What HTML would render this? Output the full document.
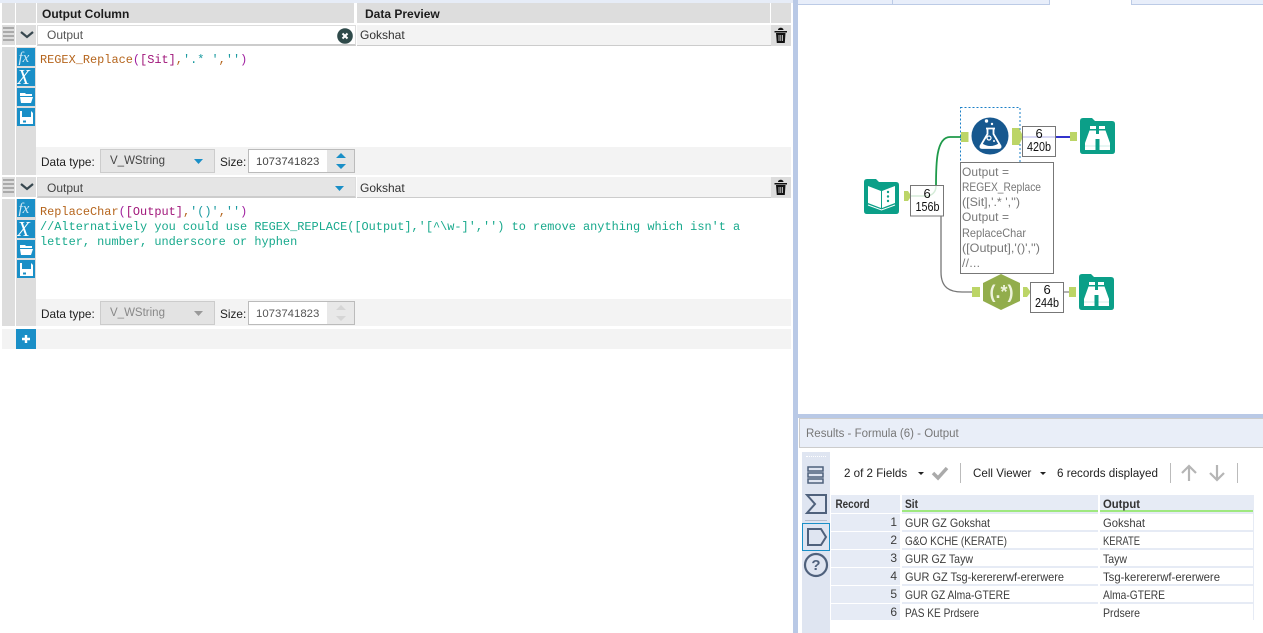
<!DOCTYPE html>
<html><head><meta charset="utf-8">
<style>
html,body{margin:0;padding:0;background:#fff;}
body{width:1263px;height:633px;position:relative;overflow:hidden;font-family:"Liberation Sans",sans-serif;font-size:12px;color:#333;}
.a{position:absolute;}
.t{position:absolute;white-space:pre;line-height:15px;}
.m{position:absolute;white-space:pre;font-family:"Liberation Mono",monospace;font-size:11.92px;line-height:15px;}
.fn{color:#b5651d}.fl{color:#a0167a}.st{color:#1a9aa0}.br{color:#a020a0}.cm{color:#17a98c}
.sq{position:absolute;left:17px;width:18px;height:18px;background:#1a8fc7;}
.sq svg{display:block}
.c{position:absolute;background:#fff;height:16px}
</style></head><body>
<div class="a" style="left:0;top:0;width:793px;height:3px;background:#e6ecf7"></div>
<div class="a" style="left:793px;top:0;width:5px;height:633px;background:#b9c9e6"></div>

<!-- header -->
<div class="a" style="left:2px;top:3px;width:13px;height:20px;background:#ddd"></div>
<div class="a" style="left:16px;top:3px;width:20px;height:20px;background:#ddd"></div>
<div class="a" style="left:37px;top:3px;width:317px;height:20px;background:#ddd"></div>
<div class="a" style="left:357px;top:3px;width:413px;height:20px;background:#ddd"></div>
<div class="a" style="left:771px;top:3px;width:20px;height:20px;background:#ddd"></div>
<div class="t" style="left:42px;top:7px;font-weight:bold;color:#1c1c1c">Output Column</div>
<div class="t" style="left:365px;top:7px;font-weight:bold;color:#1c1c1c">Data Preview</div>

<!-- row 1 -->
<div class="a" style="left:2px;top:25px;width:13px;height:20px;background:#ddd"></div>
<div class="a" style="left:3px;top:27px;width:11px;height:2px;background:#aaa;box-shadow:0 4px 0 #aaa,0 8px 0 #aaa,0 12px 0 #aaa"></div>
<div class="a" style="left:16px;top:25px;width:20px;height:20px;background:#ddd"></div>
<svg class="a" style="left:19px;top:30px" width="16" height="10"><path d="M2 2 L8 7 L14 2" fill="none" stroke="#37474f" stroke-width="2.2"/></svg>
<div class="a" style="left:37px;top:25px;width:317px;height:18px;background:#fff;border:1px solid #ddd;border-bottom:2px solid #ccc"></div>
<div class="t" style="left:47px;top:28px;color:#555">Output</div>
<svg class="a" style="left:337px;top:28px" width="16" height="16"><circle cx="8" cy="8" r="7.8" fill="#2f4a4a"/><path d="M5.5 5.5 L10.5 10.5 M10.5 5.5 L5.5 10.5" stroke="#fff" stroke-width="2"/></svg>
<div class="a" style="left:357px;top:25px;width:414px;height:20px;background:#f3f3f3;border-bottom:1px solid #ccc"></div>
<div class="t" style="left:360px;top:28px;color:#333">Gokshat</div>
<div class="a" style="left:771px;top:25px;width:20px;height:21px;background:#ddd"></div>
<svg class="a" style="left:773px;top:26px" width="16" height="18"><path d="M1.5 5 H14 V6.5 H1.5Z M5 4 C5 1 10.500 1 10.500 4Z M3 7 H12.500 L11.800 17 H3.800Z" fill="#111"/><path d="M6 9 V15 M7.800 9 V15 M9.600 9 V15" stroke="#ddd" stroke-width=".8"/></svg>

<div class="a" style="left:2px;top:47px;width:13px;height:128px;background:#ddd"></div>
<div class="a" style="left:16px;top:47px;width:20px;height:128px;background:#ddd"></div>
<div class="sq" style="top:48px"><svg width="18" height="18"><text x="1.500" y="14" font-family="Liberation Serif" font-style="italic" font-size="15" fill="#cfe8f5">fx</text></svg></div>
<div class="sq" style="top:68px"><svg width="18" height="18"><text x="0" y="16" font-family="Liberation Serif" font-style="italic" font-size="21" fill="#fff">X</text></svg></div>
<div class="sq" style="top:88px"><svg width="18" height="18"><path d="M3 7 V5 H8 L9 6 H15 V8 H6 L3 8Z M3 9 H16 L14 15 H4Z" fill="#fff"/></svg></div>
<div class="sq" style="top:108px"><svg width="18" height="18"><path d="M3 3 H14 L16 5 V16 H3Z" fill="#fff"/><rect x="5" y="3" width="9" height="6" fill="#1a8fc7"/><rect x="6" y="12.500" width="3" height="2" fill="#1a8fc7"/></svg></div>
<div class="m" style="left:40px;top:53px"><span class="fn">REGEX_Replace</span><span class="br">(</span><span class="fl">[Sit]</span><span class="fn">,</span><span class="st">'.* '</span><span class="fn">,</span><span class="st">''</span><span class="br">)</span></div>

<div class="a" style="left:36px;top:147px;width:755px;height:28px;background:#f3f3f3"></div>
<div class="t" style="left:41px;top:155px;color:#222;font-size:11.800px">Data type:</div>
<div class="a" style="left:100px;top:149px;width:113px;height:22px;background:#e5e5e5;border:1px solid #ccc"></div>
<div class="t" style="left:110px;top:154px;color:#444;font-size:11.500px">V_WString</div>
<svg class="a" style="left:193px;top:158px" width="11" height="7"><path d="M1 1 H10 L5.500 6Z" fill="#1a8fc7"/></svg>
<div class="t" style="left:220px;top:155px;color:#222;font-size:11.800px">Size:</div>
<div class="a" style="left:248px;top:149px;width:105px;height:22px;background:#fff;border:1px solid #bbb"></div>
<div class="a" style="left:327px;top:150px;width:27px;height:22px;background:#e5e5e5"></div>
<div class="t" style="left:256px;top:155px;color:#444;font-size:11.400px">1073741823</div>
<svg class="a" style="left:335px;top:152px" width="12" height="18"><path d="M1 6 L6 1 L11 6Z M1 12 H11 L6 17Z" fill="#1a8fc7"/></svg>

<!-- row 2 -->
<div class="a" style="left:2px;top:177px;width:13px;height:20px;background:#ddd"></div>
<div class="a" style="left:3px;top:179px;width:11px;height:2px;background:#aaa;box-shadow:0 4px 0 #aaa,0 8px 0 #aaa,0 12px 0 #aaa"></div>
<div class="a" style="left:16px;top:177px;width:20px;height:20px;background:#ddd"></div>
<svg class="a" style="left:19px;top:182px" width="16" height="10"><path d="M2 2 L8 7 L14 2" fill="none" stroke="#37474f" stroke-width="2.2"/></svg>
<div class="a" style="left:37px;top:177px;width:317px;height:18px;background:#e5e5e5;border:1px solid #ddd;border-bottom:2px solid #ccc"></div>
<div class="t" style="left:47px;top:181px;color:#444">Output</div>
<svg class="a" style="left:334px;top:185px" width="11" height="7"><path d="M1 1 H10 L5.500 6Z" fill="#1a8fc7"/></svg>
<div class="a" style="left:357px;top:177px;width:414px;height:20px;background:#f3f3f3;border-bottom:1px solid #ccc"></div>
<div class="t" style="left:360px;top:181px;color:#333">Gokshat</div>
<div class="a" style="left:771px;top:177px;width:20px;height:21px;background:#ddd"></div>
<svg class="a" style="left:773px;top:178px" width="16" height="18"><path d="M1.500 5 H14 V6.500 H1.500Z M5 4 C5 1 10.500 1 10.500 4Z M3 7 H12.500 L11.800 17 H3.800Z" fill="#111"/><path d="M6 9 V15 M7.800 9 V15 M9.600 9 V15" stroke="#ddd" stroke-width=".8"/></svg>

<div class="a" style="left:2px;top:199px;width:13px;height:127px;background:#ddd"></div>
<div class="a" style="left:16px;top:199px;width:20px;height:127px;background:#ddd"></div>
<div class="sq" style="top:199px"><svg width="18" height="18"><text x="1.500" y="14" font-family="Liberation Serif" font-style="italic" font-size="15" fill="#cfe8f5">fx</text></svg></div>
<div class="sq" style="top:220px"><svg width="18" height="18"><text x="0" y="16" font-family="Liberation Serif" font-style="italic" font-size="21" fill="#fff">X</text></svg></div>
<div class="sq" style="top:240px"><svg width="18" height="18"><path d="M3 7 V5 H8 L9 6 H15 V8 H6 L3 8Z M3 9 H16 L14 15 H4Z" fill="#fff"/></svg></div>
<div class="sq" style="top:260px"><svg width="18" height="18"><path d="M3 3 H14 L16 5 V16 H3Z" fill="#fff"/><rect x="5" y="3" width="9" height="6" fill="#1a8fc7"/><rect x="6" y="12.500" width="3" height="2" fill="#1a8fc7"/></svg></div>
<div class="m" style="left:40px;top:205px"><span class="fn">ReplaceChar</span><span class="br">(</span><span class="fl">[Output]</span><span class="fn">,</span><span class="st">'()'</span><span class="fn">,</span><span class="st">''</span><span class="br">)</span></div>
<div class="m cm" style="left:40px;top:220px">//Alternatively you could use REGEX_REPLACE([Output],'[^\w-]','') to remove anything which isn't a</div>
<div class="m cm" style="left:40px;top:235px">letter, number, underscore or hyphen</div>

<div class="a" style="left:36px;top:299px;width:755px;height:27px;background:#f3f3f3"></div>
<div class="t" style="left:41px;top:307px;color:#222;font-size:11.800px">Data type:</div>
<div class="a" style="left:100px;top:301px;width:113px;height:22px;background:#e3e3e3;border:1px solid #ccc"></div>
<div class="t" style="left:110px;top:306px;color:#888;font-size:11.500px">V_WString</div>
<svg class="a" style="left:193px;top:310px" width="11" height="7"><path d="M1 1 H10 L5.500 6Z" fill="#999"/></svg>
<div class="t" style="left:220px;top:307px;color:#222;font-size:11.800px">Size:</div>
<div class="a" style="left:248px;top:301px;width:105px;height:22px;background:#fff;border:1px solid #bbb"></div>
<div class="a" style="left:327px;top:302px;width:27px;height:22px;background:#e8e8e8"></div>
<div class="t" style="left:256px;top:307px;color:#555;font-size:11.400px">1073741823</div>
<svg class="a" style="left:335px;top:304px" width="12" height="18"><path d="M1 6 L6 1 L11 6Z M1 12 H11 L6 17Z" fill="#d5d5d5"/></svg>

<div class="a" style="left:2px;top:329px;width:789px;height:20px;background:#f3f3f3"></div>
<div class="a" style="left:16px;top:329px;width:20px;height:20px;background:#1a8fc7"></div>
<svg class="a" style="left:21px;top:334px" width="10" height="10"><path d="M5 1 V9 M1 5 H9" stroke="#fff" stroke-width="2.400"/></svg>

<!-- top tabs -->
<div class="a" style="left:798px;top:0;width:94px;height:4px;background:#e8eefa;border-bottom:1px solid #bccbe6"></div>
<div class="a" style="left:892px;top:0;width:156px;height:4px;background:#e8eefa;border-bottom:1px solid #bccbe6;border-left:1px solid #bccbe6;border-right:1px solid #bccbe6"></div>
<div class="a" style="left:1131px;top:0;width:132px;height:4px;background:#e8eefa;border-bottom:1px solid #bccbe6;border-left:1px solid #bccbe6"></div>

<!-- canvas -->
<svg class="a" style="left:0;top:0" width="1263" height="420">
<path d="M936 186 C936 165 936 137 950 137 L963 137" fill="none" stroke="#1e9a4a" stroke-width="1.800"/>
<path d="M904 196 H926 C932 196 936 192 936 186" fill="none" stroke="#d5ecd8" stroke-width="1.500" />
<path d="M941 216 V272 C941 288 950 292 962 292 H973" fill="none" stroke="#777" stroke-width="1.300"/>
<path d="M1022 137 H1056" stroke="#ccccf0" stroke-width="1.500"/>
<path d="M1056 137 H1072" stroke="#3333cc" stroke-width="2"/>
<path d="M1063 292 H1070" stroke="#888" stroke-width="1.300"/>
<rect x="960.500" y="107.500" width="59.500" height="55" fill="none" stroke="#1a7fc7" stroke-dasharray="2 2"/>
<!-- anchors -->
<path d="M904 191 H908 L910 194 V198 L908 201 H904Z" fill="#bcd567"/>
<rect x="961" y="132" width="7.500" height="10" fill="#bcd567"/>
<path d="M1012 128 H1019 L1022 134 V139 L1019 145 H1012Z" fill="#bcd567"/>
<rect x="1070" y="132" width="7" height="9" fill="#bcd567"/>
<rect x="972" y="287" width="8" height="10" fill="#bcd567"/>
<path d="M1023 287 H1027 L1030 291 V293 L1027 297 H1023Z" fill="#bcd567"/>
<rect x="1069" y="287" width="7" height="10" fill="#bcd567"/>
<!-- book -->
<path d="M864 182 Q864 179 867 179 H876 L879 182 H896 Q899 182 899 185 V211 Q899 214 896 214 H867 Q864 214 864 211Z" fill="#0b9f88"/>
<path d="M868 186 L881 191 V208 L868 203Z M895 186 L882 191 V208 L895 203Z" fill="#fff"/>
<path d="M868 205 L881.500 210 L895 205" fill="none" stroke="#fff" stroke-width="1"/>
<circle cx="888" cy="192" r="1.200" fill="#0b9f88"/><circle cx="888" cy="196.500" r="1.200" fill="#0b9f88"/><circle cx="888" cy="201" r="1.200" fill="#0b9f88"/>
<!-- formula -->
<circle cx="990" cy="136" r="18.500" fill="#17588f"/>
<path d="M986 128.500 H995 M987.500 128.500 V134 L980.500 146 Q980 148 982 148 H999 Q1001 148 1000.500 146 L993.500 134 V128.500" fill="none" stroke="#fff" stroke-width="1.800"/>
<path d="M981.500 143 Q990 149 999.500 143 L1000.500 146.500 Q1000.500 148 999 148 H982 Q980.500 148 980.500 146.500Z" fill="#fff"/>
<circle cx="989" cy="138" r="2" fill="none" stroke="#fff" stroke-width="1.200"/><circle cx="994" cy="141" r="1" fill="#fff"/>
<circle cx="986.500" cy="121" r="1.700" fill="#fff"/><circle cx="992" cy="124" r="1.200" fill="#fff"/>
<!-- binoculars -->
<g>
<path d="M1080 121 Q1080 118 1083 118 H1092 L1095 121 H1112 Q1115 121 1115 124 V151 Q1115 154 1112 154 H1083 Q1080 154 1080 151Z" fill="#0b9f88"/>
<path d="M1090 126 H1096 V129 H1090Z M1099 126 H1105 V129 H1099Z" fill="#fff"/>
<path d="M1089.500 130.500 H1096 V134 H1099 V130.500 H1105.500 L1110 143 V150 H1099.500 V139 H1095.500 V150 H1085 V143Z" fill="#fff"/>
<path d="M1085 146 H1095.500 M1099.500 146 H1110" stroke="#bfe6df" stroke-width=".8"/>
</g>
<g transform="translate(-1 156)">
<path d="M1080 121 Q1080 118 1083 118 H1092 L1095 121 H1112 Q1115 121 1115 124 V151 Q1115 154 1112 154 H1083 Q1080 154 1080 151Z" fill="#0b9f88"/>
<path d="M1090 126 H1096 V129 H1090Z M1099 126 H1105 V129 H1099Z" fill="#fff"/>
<path d="M1089.500 130.500 H1096 V134 H1099 V130.500 H1105.500 L1110 143 V150 H1099.500 V139 H1095.500 V150 H1085 V143Z" fill="#fff"/>
<path d="M1085 146 H1095.500 M1099.500 146 H1110" stroke="#bfe6df" stroke-width=".8"/>
</g>
<!-- regex -->
<path d="M1001 274 L1020 283 V301 L1001 310 L983 301 V283Z" fill="#92ad4c"/>
<text x="1001.500" y="298" text-anchor="middle" font-family="Liberation Sans" font-weight="bold" font-size="18" fill="#eef3dc">(.*)</text>
<!-- count boxes -->
<rect x="910.500" y="185.500" width="33" height="30.500" fill="none" stroke="#777" stroke-width="1"/>
<rect x="1022.500" y="126.500" width="33" height="30" fill="none" stroke="#777" stroke-width="1"/>
<rect x="1030.500" y="282.500" width="33" height="30" fill="none" stroke="#777" stroke-width="1"/>
<g font-family="Liberation Sans" font-size="13" fill="#111">
<text x="923.500" y="198">6</text><text x="915.500" y="211" textLength="24" lengthAdjust="spacingAndGlyphs">156b</text>
<text x="1035.500" y="138">6</text><text x="1027" y="151" textLength="24" lengthAdjust="spacingAndGlyphs">420b</text>
<text x="1043.500" y="294">6</text><text x="1035" y="307" textLength="24" lengthAdjust="spacingAndGlyphs">244b</text>
</g>
<rect x="960.500" y="162.500" width="93" height="111" fill="#fff" stroke="#777"/>
<g font-family="Liberation Sans" font-size="12" fill="#777">
<text x="962" y="176" textLength="47">Output =</text>
<text x="962" y="191" textLength="79" lengthAdjust="spacingAndGlyphs">REGEX_Replace</text>
<text x="962" y="206" textLength="58" lengthAdjust="spacingAndGlyphs">([Sit],'.* ','')</text>
<text x="962" y="221" textLength="47">Output =</text>
<text x="962" y="237" textLength="64" lengthAdjust="spacingAndGlyphs">ReplaceChar</text>
<text x="962" y="252" textLength="78" lengthAdjust="spacingAndGlyphs">([Output],'()','')</text>
<text x="962" y="267" textLength="18">//...</text>
</g>
</svg>

<!-- splitter / results -->
<div class="a" style="left:798px;top:414px;width:465px;height:4px;background:#b9c9e6"></div>
<div class="a" style="left:799px;top:418px;width:464px;height:30px;background:#e9eef8;border:1px solid #ccc;border-right:none;box-sizing:border-box"></div>
<div class="t" style="left:806px;top:427px;color:#777;font-size:11.500px">Results - Formula (6) - Output</div>
<div class="a" style="left:802px;top:452px;width:28px;height:181px;background:#dfe5f1"></div>
<div class="a" style="left:806px;top:456px;width:20px;height:1px;border-top:1px dotted #fff"></div>
<svg class="a" style="left:802px;top:460px" width="30" height="130" fill="none" stroke="#4f617c" stroke-width="1.500">
<rect x="6" y="7" width="15" height="4"/><rect x="6" y="13" width="15" height="4"/><rect x="6" y="19" width="15" height="4"/>
<path d="M5 35 H24 V53 H5 L13 44Z" stroke-width="2"/>
<path d="M6 69 H19 L24 77 L19 85 H6Z" stroke-width="2"/>
<circle cx="14" cy="105" r="11" stroke-width="2.200"/>
<text x="14" y="110" text-anchor="middle" font-family="Liberation Sans" font-weight="bold" font-size="15" fill="#4f617c" stroke="none">?</text>
</svg>
<div class="a" style="left:805px;top:520px;width:22px;height:1px;background:#b5bccb"></div>
<div class="a" style="left:802px;top:523px;width:26px;height:26px;border:1px solid #1a8fc7"></div>

<div class="a" style="left:830px;top:453px;width:433px;height:40px;background:#fff"></div>
<div class="t" style="left:844px;top:466px;color:#222;font-size:11.600px">2 of 2 Fields</div>
<svg class="a" style="left:917px;top:470px" width="8" height="6"><path d="M1 2 H7 L4 5Z" fill="#222"/></svg>
<svg class="a" style="left:930px;top:465px" width="20" height="16"><path d="M3 8 L8 13 L17 3" fill="none" stroke="#aaa" stroke-width="3.500"/></svg>
<div class="a" style="left:960px;top:463px;width:1px;height:20px;background:#bbb"></div>
<div class="t" style="left:973px;top:466px;color:#222;font-size:11.600px">Cell Viewer</div>
<svg class="a" style="left:1039px;top:470px" width="8" height="6"><path d="M1 2 H7 L4 5Z" fill="#222"/></svg>
<div class="t" style="left:1057px;top:466px;color:#222;font-size:11.650px">6 records displayed</div>
<div class="a" style="left:1170px;top:463px;width:1px;height:20px;background:#bbb"></div>
<svg class="a" style="left:1180px;top:464px" width="48" height="18" fill="none" stroke="#b5b5b5" stroke-width="2.200"><path d="M9 17 V2 M2 9 L9 2 L16 9"/><path d="M37 1 V16 M30 9 L37 16 L44 9"/></svg>
<div class="a" style="left:1237px;top:463px;width:1px;height:20px;background:#bbb"></div>

<!-- table -->
<div class="a" style="left:831px;top:495px;width:423px;height:125px;background:#e6ebf5"></div>
<div class="a" style="left:900px;top:495px;width:2px;height:125px;background:#fff"></div>
<div class="a" style="left:1098px;top:495px;width:2px;height:125px;background:#fff"></div>
<div class="a" style="left:831px;top:513px;width:69px;height:1px;background:#fff"></div>
<div class="a" style="left:831px;top:531px;width:69px;height:1px;background:#fff"></div>
<div class="a" style="left:831px;top:549px;width:69px;height:1px;background:#fff"></div>
<div class="a" style="left:831px;top:567px;width:69px;height:1px;background:#fff"></div>
<div class="a" style="left:831px;top:585px;width:69px;height:1px;background:#fff"></div>
<div class="a" style="left:831px;top:603px;width:69px;height:1px;background:#fff"></div>
<div class="a" style="left:902px;top:510px;width:196px;height:2px;background:#9fe87f"></div>
<div class="a" style="left:1100px;top:510px;width:153px;height:2px;background:#9fe87f"></div>
<div class="c" style="left:902px;top:514px;width:196px"></div><div class="c" style="left:1100px;top:514px;width:153px"></div>
<div class="c" style="left:902px;top:532px;width:196px"></div><div class="c" style="left:1100px;top:532px;width:153px"></div>
<div class="c" style="left:902px;top:550px;width:196px"></div><div class="c" style="left:1100px;top:550px;width:153px"></div>
<div class="c" style="left:902px;top:568px;width:196px"></div><div class="c" style="left:1100px;top:568px;width:153px"></div>
<div class="c" style="left:902px;top:586px;width:196px"></div><div class="c" style="left:1100px;top:586px;width:153px"></div>
<div class="c" style="left:902px;top:604px;width:196px"></div><div class="c" style="left:1100px;top:604px;width:153px"></div>

<svg class="a" style="left:0;top:0" width="1263" height="633" font-family="Liberation Sans" font-size="12" fill="#3c3c3c">
<g font-weight="bold" fill="#333">
<text x="835.500" y="508" textLength="34" lengthAdjust="spacingAndGlyphs">Record</text>
<text x="905" y="508" textLength="13" lengthAdjust="spacingAndGlyphs">Sit</text>
<text x="1103" y="508" textLength="37" lengthAdjust="spacingAndGlyphs">Output</text>
</g>
<g text-anchor="end"><text x="897" y="526">1</text><text x="897" y="544">2</text><text x="897" y="562">3</text><text x="897" y="580">4</text><text x="897" y="598">5</text><text x="897" y="616">6</text></g>
<text x="905" y="527" textLength="85" lengthAdjust="spacingAndGlyphs">GUR GZ Gokshat</text>
<text x="905" y="545" textLength="102" lengthAdjust="spacingAndGlyphs">G&amp;O KCHE (KERATE)</text>
<text x="905" y="563" textLength="68" lengthAdjust="spacingAndGlyphs">GUR GZ Tayw</text>
<text x="905" y="581" textLength="159" lengthAdjust="spacingAndGlyphs">GUR GZ Tsg-kerererwf-ererwere</text>
<text x="905" y="599" textLength="105" lengthAdjust="spacingAndGlyphs">GUR GZ Alma-GTERE</text>
<text x="905" y="617" textLength="74" lengthAdjust="spacingAndGlyphs">PAS KE Prdsere</text>
<text x="1103" y="527" textLength="42" lengthAdjust="spacingAndGlyphs">Gokshat</text>
<text x="1103" y="545" textLength="37" lengthAdjust="spacingAndGlyphs">KERATE</text>
<text x="1103" y="563" textLength="24" lengthAdjust="spacingAndGlyphs">Tayw</text>
<text x="1103" y="581" textLength="117" lengthAdjust="spacingAndGlyphs">Tsg-kerererwf-ererwere</text>
<text x="1103" y="599" textLength="62" lengthAdjust="spacingAndGlyphs">Alma-GTERE</text>
<text x="1103" y="617" textLength="37" lengthAdjust="spacingAndGlyphs">Prdsere</text>
</svg>
</body></html>
